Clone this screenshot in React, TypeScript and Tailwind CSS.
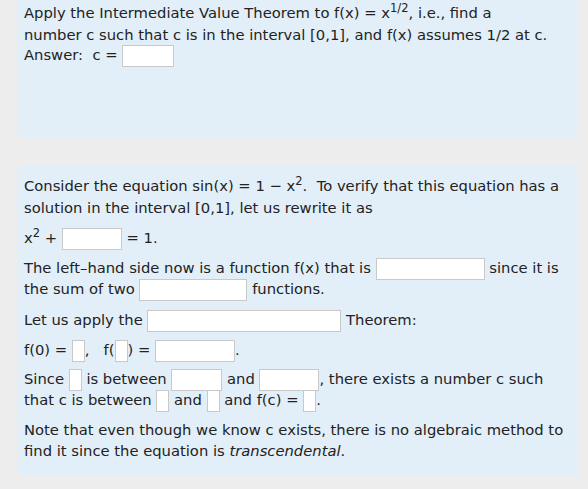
import React from "react";

function Box({ w }: { w: string }) {
  return <span className={`inline-block align-middle -my-[2px] h-[22px] bg-white border border-[#c9c9c9] ${w}`} />;
}

export default function App() {
  return (
    <div className="min-h-[489px] w-[588px] bg-[#ededed] text-[#222] text-[14.75px] leading-[21.5px] font-['DejaVu_Sans',sans-serif]">
      {/* Problem 1 */}
      <div className="ml-[17px] w-[561px] h-[137px] bg-[#e2eff9] px-[7px] pt-[2px]">
        <p>
          Apply the Intermediate Value Theorem to f(x) = x<sup className="text-[11.5px]">1/2</sup>, i.e., find a
          <br />
          number c such that c is in the interval [0,1], and f(x) assumes 1/2 at c.
        </p>
        <p className="mt-[-1px]">
          Answer:&nbsp; c = <Box w="w-[52px]" />
        </p>
      </div>

      {/* Problem 2 */}
      <div className="ml-[17px] mt-[28px] w-[561px] h-[310px] bg-[#e2eff9] px-[7px] pt-[10px]">
        <p>
          Consider the equation sin(x) = 1 − x<sup className="text-[11.5px]">2</sup>.&nbsp; To verify that this equation has a
          <br />
          solution in the interval [0,1], let us rewrite it as
        </p>
        <p className="mt-[9px]">
          x<sup className="text-[11.5px]">2</sup> + <Box w="w-[60px]" /> = 1.
        </p>
        <p className="mt-[8px]">
          The left–hand side now is a function f(x) that is <Box w="w-[109px]" /> since it is
          <br />
          the sum of two <Box w="w-[108px]" /> functions.
        </p>
        <p className="mt-[9px]">
          Let us apply the <Box w="w-[194px]" /> Theorem:
        </p>
        <p className="mt-[9px]">
          f(0) = <Box w="w-[13px]" />,&nbsp;&nbsp; f(<Box w="w-[13px]" />) = <Box w="w-[80px]" />.
        </p>
        <p className="mt-[7px]">
          Since <Box w="w-[13px]" /> is between <Box w="w-[51px]" /> and <Box w="w-[60px]" />, there exists a number c such
          <br />
          that c is between <Box w="w-[13px]" /> and <Box w="w-[13px]" /> and f(c) = <Box w="w-[13px]" />.
        </p>
        <p className="mt-[8px]">
          Note that even though we know c exists, there is no algebraic method to
          <br />
          find it since the equation is <i>transcendental</i>.
        </p>
      </div>
    </div>
  );
}
